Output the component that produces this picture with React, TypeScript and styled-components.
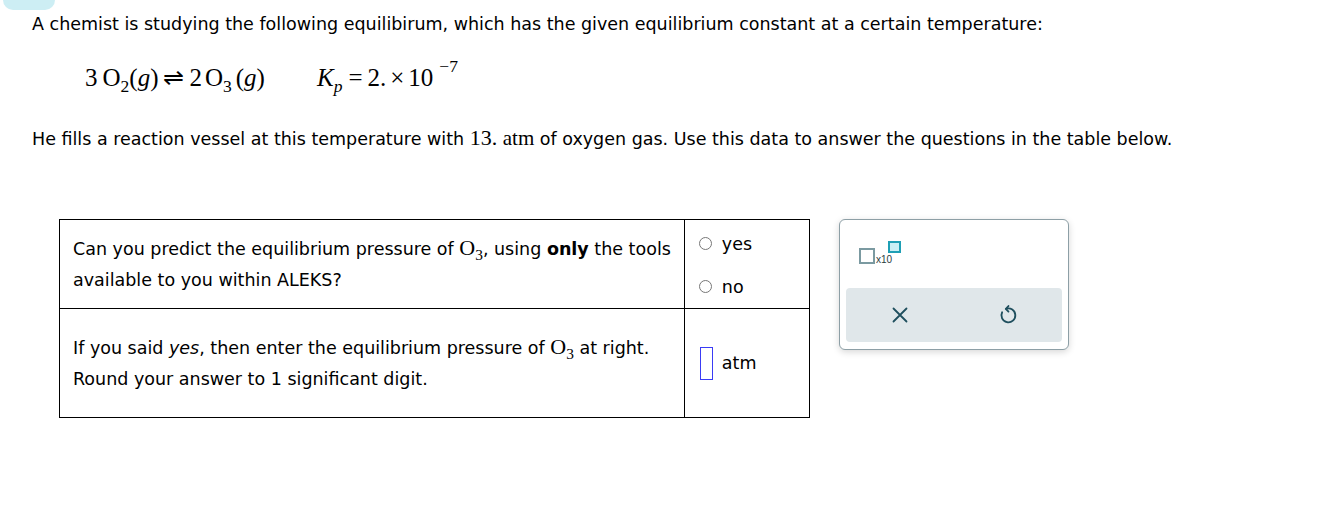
import React from "react";
import styled, { createGlobalStyle } from "styled-components";

const Global = createGlobalStyle`
  html, body { margin: 0; padding: 0; background: #fff; }
  body { font-family: "DejaVu Sans", Verdana, sans-serif; font-size: 17.5px; color: #000; }
`;

const Page = styled.div`
  position: relative;
  width: 1337px;
  height: 532px;
  overflow: hidden;
`;

const Tab = styled.div`
  margin-left: 3px;
  width: 52px;
  height: 10px;
  background: #cdeef4;
  border-radius: 0 0 10px 10px;
`;

const Para = styled.p<{ $top: number }>`
  margin: ${(p) => p.$top}px 0 0 32px;
  line-height: 20px;
  white-space: nowrap;
`;

const Equation = styled.div`
  margin: 24px 0 0 85px;
  height: 40px;
  line-height: 40px;
  font-family: "Liberation Serif", "Times New Roman", serif;
  font-size: 25px;
  white-space: nowrap;
`;

const Sub = styled.sub`
  font-size: 0.7em;
  vertical-align: -0.35em;
  line-height: 0;
`;

const Sup = styled.sup`
  font-size: 0.7em;
  vertical-align: 0.8em;
  line-height: 0;
  margin-left: 6px;
`;

const Gap = styled.span<{ $w: number }>`
  display: inline-block;
  width: ${(p) => p.$w}px;
`;

const Serif = styled.span<{ $size: number }>`
  font-family: "Liberation Serif", "Times New Roman", serif;
  font-size: ${(p) => p.$size}px;
`;

const Row = styled.div`
  display: flex;
  align-items: flex-start;
  margin: 70px 0 0 59px;
`;

const Table = styled.table`
  border-collapse: collapse;
  width: 751px;
`;

const Cell = styled.td<{ $w: number; $h: number }>`
  border: 1px solid #000;
  width: ${(p) => p.$w}px;
  height: ${(p) => p.$h}px;
  box-sizing: border-box;
  padding: 0 0 0 13px;
  vertical-align: middle;
  line-height: 31px;
  white-space: nowrap;
`;

const AnswerCell = styled(Cell)`
  padding-left: 14px;
`;

const Radios = styled.div`
  display: flex;
  flex-direction: column;
  gap: 21px;
  margin-top: 2px;
`;

const RadioLabel = styled.label`
  display: flex;
  align-items: center;
  gap: 10px;
  line-height: 22px;
`;

const Circle = styled.span`
  display: inline-block;
  width: 13px;
  height: 13px;
  border: 1px solid #777;
  border-radius: 50%;
  box-sizing: border-box;
`;

const AnswerLine = styled.div`
  display: flex;
  align-items: center;
  gap: 9px;
  margin-left: 1px;
`;

const InputBox = styled.span`
  display: inline-block;
  width: 13px;
  height: 33px;
  border: 1px solid #3a3cf5;
  box-sizing: border-box;
`;

const Panel = styled.div`
  margin-left: 29px;
  width: 230px;
  height: 131px;
  box-sizing: border-box;
  border: 1px solid #8d9fa6;
  border-radius: 6px;
  box-shadow: 0 2px 7px rgba(0, 0, 0, 0.16);
  padding: 0 6px 7px 6px;
  display: flex;
  flex-direction: column;
  background: #fff;
`;

const PanelTop = styled.div`
  flex: 1;
  display: flex;
  align-items: flex-start;
  padding: 21px 0 0 13px;
`;

const Sci = styled.div`
  position: relative;
  width: 44px;
  height: 24px;
`;

const BaseBox = styled.span`
  position: absolute;
  left: 0;
  top: 7px;
  width: 16px;
  height: 16px;
  border: 2px solid #7b9aa1;
  box-sizing: border-box;
`;

const ExpBox = styled.span`
  position: absolute;
  left: 29px;
  top: 0;
  width: 13px;
  height: 12px;
  border: 2px solid #1e9fb5;
  background: #c9eff5;
  box-sizing: border-box;
`;

const Times10 = styled.span`
  position: absolute;
  left: 17px;
  top: 13px;
  font-family: "Liberation Sans", Arial, sans-serif;
  font-size: 10px;
  color: #2b3b40;
`;

const ButtonBar = styled.div`
  height: 54px;
  background: #e0e7ea;
  border-radius: 4px;
  display: flex;
`;

const IconButton = styled.button`
  flex: 1;
  border: none;
  background: transparent;
  display: flex;
  align-items: center;
  justify-content: center;
  padding: 0;
  color: #1f4f5e;
`;

const Bold = styled.b`
  font-weight: bold;
`;

function O3() {
  return (
    <Serif $size={22}>
      O<Sub>3</Sub>
    </Serif>
  );
}

export default function App() {
  return (
    <Page>
      <Global />
      <Tab />
      <Para $top={4}>
        A chemist is studying the following equilibirum, which has the given equilibrium constant at a certain temperature:
      </Para>
      <Equation>
        3<Gap $w={5} />O<Sub>2</Sub>(<i>g</i>)<Gap $w={5} />⇌<Gap $w={5} />2<Gap $w={3} />O<Sub>3</Sub>
        <Gap $w={4} />(<i>g</i>)<Gap $w={52} />
        <i>K</i>
        <Sub>
          <i>p</i>
        </Sub>
        <Gap $w={6} />=<Gap $w={5} />2.<Gap $w={4} />×<Gap $w={4} />10
        <Sup>−7</Sup>
      </Equation>
      <Para $top={30}>
        He fills a reaction vessel at this temperature with <Serif $size={22}>13.</Serif>{" "}
        <Serif $size={21}>atm</Serif> of oxygen gas. Use this data to answer the questions in the table below.
      </Para>
      <Row>
        <Table>
          <tbody>
            <tr>
              <Cell $w={625} $h={89}>
                Can you predict the equilibrium pressure of <O3 />, using <Bold>only</Bold> the tools
                <br />
                available to you within ALEKS?
              </Cell>
              <AnswerCell $w={126} $h={89}>
                <Radios>
                  <RadioLabel>
                    <Circle />
                    yes
                  </RadioLabel>
                  <RadioLabel>
                    <Circle />
                    no
                  </RadioLabel>
                </Radios>
              </AnswerCell>
            </tr>
            <tr>
              <Cell $w={625} $h={109}>
                If you said <i>yes</i>, then enter the equilibrium pressure of <O3 /> at right.
                <br />
                Round your answer to 1 significant digit.
              </Cell>
              <AnswerCell $w={126} $h={109}>
                <AnswerLine>
                  <InputBox />
                  atm
                </AnswerLine>
              </AnswerCell>
            </tr>
          </tbody>
        </Table>
        <Panel>
          <PanelTop>
            <Sci>
              <BaseBox />
              <Times10>x10</Times10>
              <ExpBox />
            </Sci>
          </PanelTop>
          <ButtonBar>
            <IconButton aria-label="clear">
              <svg width="18" height="18" viewBox="0 0 18 18" fill="none" stroke="currentColor" strokeWidth="1.8" strokeLinecap="round">
                <path d="M2.5 2.5 L15.5 15.5 M15.5 2.5 L2.5 15.5" />
              </svg>
            </IconButton>
            <IconButton aria-label="undo">
              <svg width="22" height="22" viewBox="0 0 24 24" fill="none" stroke="currentColor" strokeWidth="2" strokeLinecap="round" strokeLinejoin="round">
                <path d="M10 5.2 A7.6 7.6 0 1 1 5.6 9" />
                <path d="M12.5 2.2 L9.6 5.2 L12.5 8.2" />
              </svg>
            </IconButton>
          </ButtonBar>
        </Panel>
      </Row>
    </Page>
  );
}
